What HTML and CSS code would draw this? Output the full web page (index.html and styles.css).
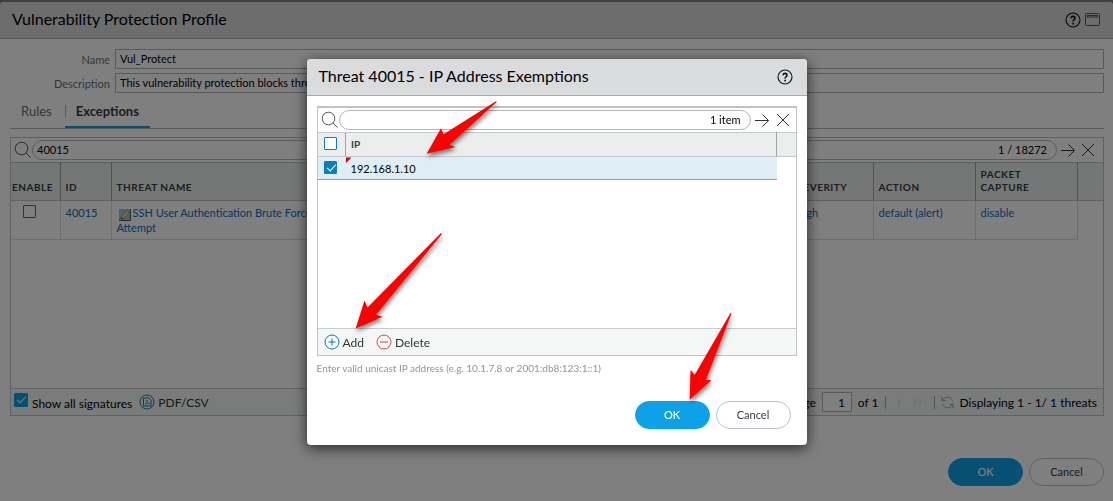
FILE: index.html
```html
<!DOCTYPE html>
<html lang="en">
<head>
<meta charset="utf-8">
<title>Vulnerability Protection Profile</title>
<link rel="stylesheet" href="styles.css">
</head>
<body>
<svg class="sprite" aria-hidden="true">
  <symbol id="i-search" viewBox="0 0 18 18"><circle cx="7.5" cy="7.5" r="6.3"/><path d="M12 12l4.6 4.6"/></symbol>
  <symbol id="i-arrow" viewBox="0 0 16 14"><path d="M1 7.5h13.500M8.500 1.500l6 6-6 6"/></symbol>
  <symbol id="i-close" viewBox="0 0 14 14"><path d="M1 1l12 12M13 1L1 13"/></symbol>
  <symbol id="i-help" viewBox="0 0 16 16"><circle cx="8" cy="8" r="7"/><path class="thick" d="M6.200 6.200c0-2.400 3.800-2.400 3.800 0 0 1.300-1.900 1.400-1.900 3.200M8.100 10.800v1.600"/></symbol>
</svg>

<main class="profile">
  <header class="titlebar">
    <h1>Vulnerability Protection Profile</h1>
    <button class="icon-btn" aria-label="Help"><svg class="ico help"><use href="#i-help"/></svg></button>
    <button class="icon-btn" aria-label="Maximize"><svg class="ico window" viewBox="0 0 16 14"><rect x=".5" y=".5" width="14" height="12" rx="1"/><rect x="2.500" y="2.500" width="10" height="1.500"/></svg></button>
  </header>

  <div class="content">
    <form class="fields">
      <label for="name">Name</label><input id="name" value="Vul_Protect">
      <label for="desc">Description</label><input id="desc" value="This vulnerability protection blocks threats">
    </form>

    <nav class="tabs">
      <a href="#rules">Rules</a>
      <a href="#exceptions" class="active">Exceptions</a>
    </nav>

    <section class="grid">
      <div class="searchbar">
        <svg class="ico search"><use href="#i-search"/></svg>
        <div class="pill"><input aria-label="Search signatures" value="40015"><span>1 / 18272</span></div>
        <button class="icon-btn" aria-label="Apply filter"><svg class="ico arrow"><use href="#i-arrow"/></svg></button>
        <button class="icon-btn" aria-label="Clear filter"><svg class="ico close"><use href="#i-close"/></svg></button>
      </div>
      <table class="signatures">
        <colgroup><col class="c-enable"><col class="c-id"><col class="c-threat"><col><col class="c-severity"><col class="c-wide"><col class="c-wide"><col class="c-end"></colgroup>
        <thead><tr><th class="enable">Enable</th><th>ID</th><th>Threat Name</th><th></th><th>Severity</th><th>Action</th><th>Packet Capture</th><th></th></tr></thead>
        <tbody><tr>
          <td class="center"><input type="checkbox" aria-label="Enable 40015"></td>
          <td><a href="#40015">40015</a></td>
          <td class="threat"><svg class="pencil" viewBox="0 0 12 12"><rect width="12" height="12" fill="#8fc4e8"/><path d="M0 11.500h11.500V0" fill="none" stroke="#555"/><path d="M2 10l.8-2.800 5.700-5.700 2 2-5.700 5.700z" fill="#ffd768" stroke="#a8792c" stroke-width=".6"/><path d="M2 10l.6-2 1.400 1.400z" fill="#443a30"/></svg><a href="#threat">SSH User Authentication Brute Force Attempt</a></td>
          <td></td>
          <td><a href="#severity">high</a></td>
          <td><a href="#action">default (alert)</a></td>
          <td><a href="#capture">disable</a></td>
          <td class="blank"></td>
        </tr></tbody>
      </table>
      <footer class="toolbar">
        <label class="show-all"><input type="checkbox" checked><span>Show all signatures</span></label>
        <button class="tool pdf"><svg class="round-ico" viewBox="0 0 16 16"><circle cx="8" cy="8" r="7"/><path d="M4.500 4h5.500l2 2v6h-7.500z"/><path class="fine" d="M6 10.500c1.500-1 2-3 2-4.500 0 2 1 3 2.500 3.300-1.500 0-3 .2-4.500 1.200"/></svg>PDF/CSV</button>
        <div class="pager">
          <label for="page">Page</label><input id="page" value="1"><span>of 1</span>
          <i class="bar"></i>
          <svg class="steps" viewBox="0 0 36 10"><path d="M6 1l4 4-4 4zM22 1l4 4-4 4zM27 1l4 4-4 4zM33 1h1v8h-1z"/></svg>
          <i class="bar"></i>
          <svg class="ico refresh" viewBox="0 0 14 14"><path d="M1 1v4h4M1.500 5c2-5 9-5 11 .5M13 13V9H9M12.500 9c-2 5-9 5-11-.5"/></svg>
          <span>Displaying 1 - 1/ 1 threats</span>
        </div>
      </footer>
    </section>

    <div class="actions">
      <button class="btn primary">OK</button>
      <button class="btn">Cancel</button>
    </div>
  </div>
</main>

<div class="mask">
  <section class="modal" role="dialog" aria-labelledby="modal-title">
    <header class="titlebar">
      <h2 id="modal-title">Threat 40015 - IP Address Exemptions</h2>
      <button class="icon-btn" aria-label="Help"><svg class="ico help"><use href="#i-help"/></svg></button>
    </header>
    <div class="modal-body">
      <section class="grid">
        <div class="searchbar">
          <svg class="ico search"><use href="#i-search"/></svg>
          <div class="pill"><input aria-label="Search addresses"><span>1 item</span></div>
          <button class="icon-btn" aria-label="Apply filter"><svg class="ico arrow"><use href="#i-arrow"/></svg></button>
          <button class="icon-btn" aria-label="Clear filter"><svg class="ico close"><use href="#i-close"/></svg></button>
        </div>
        <div class="list">
          <table class="addresses">
            <colgroup><col class="c-check"><col><col class="c-scroll"></colgroup>
            <thead><tr><th class="check"><input type="checkbox" aria-label="Select all"></th><th>IP</th><th></th></tr></thead>
            <tbody><tr><td class="check"><input type="checkbox" checked aria-label="Select 192.168.1.10"></td><td class="edited">192.168.1.10</td><td class="blank"></td></tr></tbody>
          </table>
        </div>
        <footer class="toolbar">
          <button class="tool add"><svg class="round-ico" viewBox="0 0 16 16"><circle cx="8" cy="8" r="7"/><path d="M4.500 8h7M8 4.500v7"/></svg>Add</button>
          <button class="tool delete"><svg class="round-ico" viewBox="0 0 16 16"><circle cx="8" cy="8" r="7"/><path d="M4 8h8"/></svg>Delete</button>
        </footer>
      </section>
      <p class="hint">Enter valid unicast IP address (e.g. 10.1.7.8 or 2001:db8:123:1::1)</p>
      <div class="actions">
        <button class="btn primary">OK</button>
        <button class="btn">Cancel</button>
      </div>
    </div>
    <svg class="pointers" viewBox="307 59 500 386" aria-hidden="true">
      <path d="M426.700 153.700L441 128.300l2.500 6L496 101.200l.8.800-47.300 42.800 6 2.200z"/>
      <path d="M355.700 328.500l8.800-27.900 3 6.900L441 233l1 1-66 80.800 6.500 1.900z"/>
      <path d="M689.700 399.700l.8-29.800 4.300 4.900L730.500 313l1 .6-25.700 66.400h5.700z"/>
    </svg>
  </section>
</div>
</body>
</html>
```

FILE: styles.css
```css
* { box-sizing: border-box; }
body {
  margin: 0;
  min-height: 100vh;
  display: flex;
  background: #808080;
  color: #000;
  font: 11px/15px Lato, "Open Sans", sans-serif;
}
h1, h2, p { margin: 0; }
button, input { font: inherit; color: inherit; }
a { color: #0a6cc0; text-decoration: none; }
.sprite { position: absolute; width: 0; height: 0; }

.ico, .round-ico { display: block; flex: none; fill: none; stroke: #555; stroke-width: 1; }
.ico.help { width: 16px; height: 16px; stroke: #111; stroke-width: 1.1; }
.thick { stroke-width: 1.6; }
.fine { stroke-width: .6; }
.ico.window { width: 16px; height: 14px; }
.ico.search { width: 18px; height: 18px; }
.ico.arrow { width: 16px; height: 14px; stroke: #333; }
.ico.close { width: 14px; height: 14px; stroke: #333; }
.icon-btn { display: flex; padding: 0; border: 0; background: none; }

.profile {
  flex: 1;
  display: flex;
  flex-direction: column;
  margin-top: 2px;
  background: #fff;
  border-radius: 4px 4px 0 0;
}
.titlebar {
  display: flex;
  align-items: center;
  gap: 4px;
  height: 37px;
  padding: 0 14px 0 12px;
  background: #dadbdd;
  border-bottom: 1px solid #a8abae;
  border-radius: 4px 4px 0 0;
}
.profile .titlebar { padding-right: 12px; }
.titlebar h1, .titlebar h2 { flex: 1; font-size: 16px; line-height: 20px; font-weight: 400; padding-bottom: 2px; }

.content { flex: 1; display: flex; flex-direction: column; padding: 10px 9px 15px 10px; }
.fields {
  display: grid;
  grid-template-columns: 100px 1fr;
  gap: 4px 5px;
  align-items: center;
}
.fields label { text-align: right; color: #6a7077; }
.fields input {
  width: 100%;
  height: 20px;
  padding: 0 4px 2px;
  border: 1px solid #b0b3b6;
  border-radius: 1px;
  background: #fff;
}

.tabs { display: flex; margin-top: 8px; border-bottom: 1px solid #b4b7ba; }
.tabs a { padding: 2px 11px 7px; font-size: 13px; line-height: 16px; color: #6a7077; border-bottom: 2px solid transparent; }
.tabs a:first-child { padding-right: 13px; }
.tabs .active {
  color: #333a42;
  font-weight: 700;
  border-bottom-color: #0aa0e6;
  background: linear-gradient(#b4b7ba, #b4b7ba) 0 4px / 1px 13px no-repeat;
}

.grid { display: flex; flex-direction: column; border: 1px solid #bfc3c6; }
.profile .grid { flex: 1; margin-top: 8px; }
.searchbar { display: flex; align-items: center; height: 24px; padding: 0 6px 0 3px; }
.profile .searchbar { padding-right: 8px; }
.searchbar .arrow { margin-right: 6px; }
.profile .searchbar .arrow { margin-right: 5px; }
.pill {
  flex: 1;
  display: flex;
  align-items: center;
  height: 20px;
  margin: 0 3px 0 0;
  padding: 0 9px 2px 4px;
  border: 1px solid #b4b8bb;
  border-radius: 10px;
}
.pill input { flex: 1; min-width: 0; padding: 0; border: 0; background: none; outline: 0; }

table { width: 100%; border-collapse: collapse; table-layout: fixed; }
th { text-align: left; font-size: 10px; line-height: 13px; color: #333a42; background: #ebeeed; }
.signatures th {
  height: 38px;
  padding: 0 5px 6px;
  vertical-align: bottom;
  text-transform: uppercase;
  letter-spacing: .5px;
  border: solid #9fa3a5;
  border-width: 1px 1px 1px 0;
  border-top-color: #bfc3c6;
  border-bottom-color: #bfc3c6;
}
.signatures th.enable { padding-left: 1px; padding-right: 0; }
.signatures th:last-child { border-right: 0; }
.signatures td { height: 39px; padding: 4px 5px; vertical-align: top; border: solid #d8dadc; border-width: 0 1px 1px 0; }
.signatures td.center { padding-left: 12px; }
.signatures td.blank { border: 0; }
.c-enable { width: 49px; }
.c-id { width: 51px; }
.c-threat { width: 220px; }
.c-severity { width: 81px; }
.c-wide { width: 102px; }
.c-end { width: 26px; }
.pencil { width: 12px; height: 12px; margin: 0 2px -4px; }

input[type="checkbox"] {
  appearance: none;
  display: block;
  flex: none;
  position: relative;
  width: 13px;
  height: 13px;
  margin: 0;
  border: 1px solid #0a80b8;
  border-radius: 1px;
  background: #fff;
}
input[type="checkbox"]:checked { background: #0a80b8; }
input[type="checkbox"]:checked::after {
  content: "";
  position: absolute;
  left: 2px;
  top: 2px;
  width: 8px;
  height: 4px;
  border: solid #fff;
  border-width: 0 0 1px 1px;
  transform: rotate(-48deg);
  transform-origin: center;
}

.toolbar {
  display: flex;
  align-items: center;
  height: 27px;
  padding: 0 6px;
  background: #f5f7f7;
  border-top: 1px solid #c8cbce;
  font-size: 12px;
}
.profile .toolbar { margin-top: auto; padding: 0 6px 0 3px; }
.show-all { display: flex; gap: 4px; }
.show-all span { padding-top: 4px; line-height: 14px; }
.show-all input[type="checkbox"] { width: 14px; height: 14px; background: #0a9fe0; border-color: #0a9fe0; }
.tool { display: flex; align-items: center; gap: 3px; padding: 0; border: 0; background: none; color: #333; }
.round-ico { width: 16px; height: 16px; }
.pdf { margin-left: 7px; }
.pdf .round-ico, .add .round-ico { stroke: #1079a8; }
.delete { margin-left: 12px; }
.delete .round-ico { stroke: #cf4650; }
.pager { display: flex; align-items: center; margin-left: auto; }
.pager input {
  width: 30px;
  height: 20px;
  margin: 0 6px;
  padding: 0 6px;
  text-align: right;
  border: 1px solid #b0b3b6;
  border-radius: 1px;
  background: #fff;
}
.bar { width: 1px; height: 13px; margin: 0 6px; background: #aaa; }
.steps { width: 36px; height: 10px; fill: #e4e6e7; }
.refresh { width: 13px; height: 13px; margin-right: 6px; stroke: #999; }

.actions { display: flex; justify-content: flex-end; gap: 6px; }
.profile .actions { margin-top: 42px; }
.btn {
  width: 75px;
  height: 28px;
  padding: 0 0 2px;
  border: 1px solid #bcc0c4;
  border-radius: 14px;
  background: #fff;
  color: #333a42;
}
.btn.primary { background: #0da2e7; border-color: #0da2e7; color: #fff; font-weight: 500; }

.mask {
  position: fixed;
  inset: 0;
  display: flex;
  align-items: center;
  justify-content: center;
  padding-top: 3px;
  background: rgba(0, 0, 0, .5);
}
.modal {
  position: relative;
  width: 500px;
  background: #fff;
  border-radius: 4px;
  box-shadow: 0 3px 14px rgba(0, 0, 0, .7);
}
.modal-body { padding: 10px 10px 16px; }
.modal .grid { border-top-width: 2px; }
.list { min-height: 196px; }
.addresses th { height: 24px; padding: 0 5px; border: solid #c4c8ca; border-width: 1px 0; }
.addresses th:nth-child(2) { border: 1px solid #9fa3a5; border-color: #c4c8ca #9fa3a5; }
.addresses td { height: 23px; padding: 0 5px; background: #dfedf4; border: solid #62afd5; border-width: 1px 0; }
.addresses .check { padding: 0 6px 2px; }
.addresses td.edited { background: linear-gradient(135deg, #d00012 4px, transparent 4px) #dfedf4; }
.addresses td.blank { background: none; border: 0; }
.c-check { width: 28px; }
.c-scroll { width: 19px; }
.hint { margin: 4px 0 25px; font-size: 10px; line-height: 16px; color: #8f959b; }
.modal .actions { padding-right: 6px; }
.pointers {
  position: absolute;
  inset: 0;
  width: 100%;
  height: 100%;
  pointer-events: none;
  fill: #f00;
  filter: drop-shadow(1px 3px 2px rgba(0, 0, 0, .5));
}
```
